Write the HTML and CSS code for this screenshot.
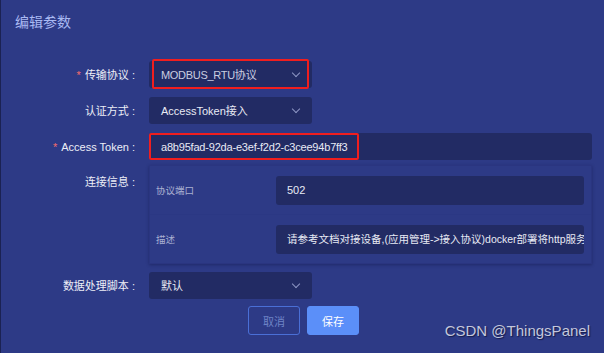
FILE: index.html
```html
<!DOCTYPE html>
<html lang="zh-CN">
<head>
  <meta charset="UTF-8" />
  <meta name="viewport" content="width=device-width, initial-scale=1.0" />
  <title>编辑参数</title>
  <link rel="stylesheet" href="styles.css">
</head>
<body>
  <div class="dialog">
    <div class="dialog-title">编辑参数</div>

    <div class="form">
      <div class="form-row row-protocol">
        <label class="form-label required">传输协议 :</label>
        <div class="select marked">
          <span class="select-text dim"><span class="caps">MODBUS_RTU</span>协议</span>
          <span class="arrow"></span>
        </div>
      </div>

      <div class="form-row row-auth">
        <label class="form-label">认证方式 :</label>
        <div class="select">
          <span class="select-text">AccessToken接入</span>
          <span class="arrow"></span>
        </div>
      </div>

      <div class="form-row row-token">
        <label class="form-label required">Access Token :</label>
        <div class="input wide">
          <span class="token marked">a8b95fad-92da-e3ef-f2d2-c3cee94b7ff3</span>
        </div>
      </div>

      <div class="form-row row-conn">
        <label class="form-label top">连接信息 :</label>
        <div class="conn-box">
          <div class="conn-row">
            <span class="conn-label">协议端口</span>
            <div class="input conn-input">502</div>
          </div>
          <div class="conn-row">
            <span class="conn-label">描述</span>
            <div class="input conn-input clip">请参考文档对接设备,(应用管理-&gt;接入协议)docker部署将http服务地址改为容器名</div>
          </div>
        </div>
      </div>

      <div class="form-row row-script">
        <label class="form-label">数据处理脚本 :</label>
        <div class="select">
          <span class="select-text">默认</span>
          <span class="arrow"></span>
        </div>
      </div>

      <div class="actions">
        <button class="btn btn-cancel">取消</button>
        <button class="btn btn-save">保存</button>
      </div>
    </div>
  </div>

  <div class="watermark">CSDN @ThingsPanel</div>
</body>
</html>
```

FILE: styles.css
```css
:root {
  --bg: #2d3a86;
  --field: #222b64;
  --text: #e8eaf4;
  --label: #eceef6;
  --dim: #aab1d2;
  --mark: #f01e1e;
  --accent: #5b8ff9;
}

html, body {
  margin: 0;
  padding: 0;
  height: 100%;
}

body {
  font-family: "Liberation Sans", "Noto Sans CJK SC", sans-serif;
  background-color: var(--bg);
  color: var(--text);
  border-left: 1px solid #1b2253;
  box-sizing: border-box;
  overflow: hidden;
}

.dialog-title {
  padding: 12px 0 0 14px;
  height: 23px;
  font-size: 14px;
  line-height: 20px;
  color: #a9b9f2;
}

.form {
  padding-top: 26px;
}

.form-row {
  display: flex;
  align-items: center;
}

.form-label {
  width: 134px;
  text-align: right;
  font-size: 11px;
  line-height: 16px;
  color: var(--label);
  flex-shrink: 0;
  margin-right: 14px;
  white-space: nowrap;
}

.form-label.required::before {
  content: "*";
  color: #f56c6c;
  margin-right: 4px;
}

.form-label.top {
  align-self: flex-start;
  padding-top: 9px;
}

.select,
.input {
  background-color: var(--field);
  border-radius: 3px;
  height: 27px;
  box-sizing: border-box;
  display: flex;
  align-items: center;
  font-size: 11px;
  line-height: 16px;
  color: var(--text);
}

.select {
  width: 163px;
  padding: 0 12px;
  justify-content: space-between;
  position: relative;
}

.select-text.dim {
  color: #c9cde0;
}

.caps {
  letter-spacing: -0.3px;
}

.arrow {
  width: 5px;
  height: 5px;
  border-right: 1px solid #8d95c4;
  border-bottom: 1px solid #8d95c4;
  transform: rotate(45deg);
  margin-top: -3px;
  margin-right: 1px;
}

.select.marked::after {
  content: "";
  position: absolute;
  left: 3px;
  top: -2px;
  right: 3px;
  bottom: -1px;
  border: 2px solid var(--mark);
  border-radius: 2px;
}

.row-auth { margin-top: 9px; }
.row-token { margin-top: 9px; }
.row-conn { margin-top: 5px; }
.row-script { margin-top: 8px; }

.input.wide {
  width: 443px;
  padding: 0;
}

.token {
  display: flex;
  align-items: center;
  height: 100%;
  box-sizing: border-box;
  white-space: nowrap;
  letter-spacing: -0.2px;
}

.token.marked {
  border: 2px solid var(--mark);
  border-radius: 2px;
  padding: 0 10px;
  width: 210px;
}

.conn-box {
  width: 443px;
  border: 1px solid #2a3580;
  box-shadow: 0 1px 3px rgba(16, 22, 70, 0.45);
  box-sizing: border-box;
}

.conn-row {
  display: flex;
  align-items: center;
  height: 48px;
  padding: 0 7px 0 6px;
}

.conn-row + .conn-row {
  border-top: 1px solid #2b3884;
}

.conn-label {
  width: 120px;
  font-size: 9.5px;
  color: var(--dim);
}

.conn-input {
  flex: 1;
  height: 29px;
  padding: 0 11px;
  font-size: 11px;
}

.conn-input.clip {
  overflow: hidden;
  white-space: nowrap;
  font-size: 10.5px;
}

.actions {
  display: flex;
  gap: 7px;
  padding-left: 247px;
  margin-top: 7px;
}

.btn {
  width: 52px;
  height: 29px;
  border-radius: 3px;
  font-family: inherit;
  font-size: 11px;
  cursor: pointer;
  padding: 0;
}

.btn-cancel {
  background: transparent;
  border: 1px solid #4a6fd6;
  color: #6f84c6;
}

.btn-save {
  background: var(--accent);
  border: 1px solid var(--accent);
  color: #fff;
}

.watermark {
  position: absolute;
  right: 14px;
  bottom: 14px;
  font-size: 15px;
  color: #c3c7dc;
  text-shadow: 1px 1px 1px rgba(10, 14, 50, 0.7);
}
```
